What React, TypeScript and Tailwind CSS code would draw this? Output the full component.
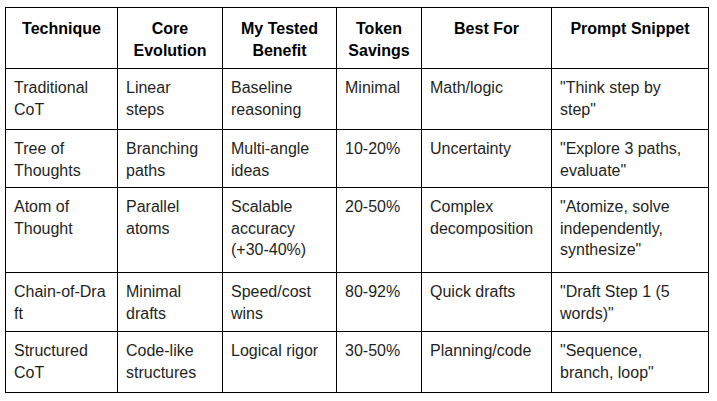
const headers = [
  ['Technique'],
  ['Core', 'Evolution'],
  ['My Tested', 'Benefit'],
  ['Token', 'Savings'],
  ['Best For'],
  ['Prompt Snippet'],
];

const rows: { h: string; cells: string[][] }[] = [
  {
    h: 'h-[61px]',
    cells: [['Traditional', 'CoT'], ['Linear', 'steps'], ['Baseline', 'reasoning'], ['Minimal'], ['Math/logic'], ['"Think step by', 'step"']],
  },
  {
    h: 'h-[58px]',
    cells: [['Tree of', 'Thoughts'], ['Branching', 'paths'], ['Multi-angle', 'ideas'], ['10-20%'], ['Uncertainty'], ['"Explore 3 paths,', 'evaluate"']],
  },
  {
    h: 'h-[85px]',
    cells: [
      ['Atom of', 'Thought'],
      ['Parallel', 'atoms'],
      ['Scalable', 'accuracy', '(+30-40%)'],
      ['20-50%'],
      ['Complex', 'decomposition'],
      ['"Atomize, solve', 'independently,', 'synthesize"'],
    ],
  },
  {
    h: 'h-[59px]',
    cells: [['Chain-of-Dra', 'ft'], ['Minimal', 'drafts'], ['Speed/cost', 'wins'], ['80-92%'], ['Quick drafts'], ['"Draft Step 1 (5', 'words)"']],
  },
  {
    h: 'h-[61px]',
    cells: [['Structured', 'CoT'], ['Code-like', 'structures'], ['Logical rigor'], ['30-50%'], ['Planning/code'], ['"Sequence,', 'branch, loop"']],
  },
];

const widths = ['w-[112px]', 'w-[105px]', 'w-[114px]', 'w-[85px]', 'w-[130px]', 'w-[157px]'];

export default function App() {
  return (
    <div className="w-[717px] h-[401px] bg-white pl-[5px] pt-[7px] font-['Liberation_Sans',Arial,sans-serif] text-[16px] leading-[21.5px] text-black">
      <table className="table-fixed border-collapse w-[704px]">
        <colgroup>
          {widths.map((w, i) => (
            <col key={i} className={w} />
          ))}
        </colgroup>
        <thead>
          <tr className="h-[61px]">
            {headers.map((lines, i) => (
              <th key={i} className="border border-black align-top text-center font-bold px-2 pt-[10px]">
                {lines.map((l, j) => (
                  <div key={j} className="whitespace-nowrap">{l}</div>
                ))}
              </th>
            ))}
          </tr>
        </thead>
        <tbody>
          {rows.map((r, ri) => (
            <tr key={ri} className={r.h}>
              {r.cells.map((lines, ci) => (
                <td key={ci} className="border border-black align-top text-left pl-[8px] pr-2 pt-[8px] text-[#1f1f1f]">
                  {lines.map((l, j) => (
                    <div key={j} className="whitespace-nowrap">{l}</div>
                  ))}
                </td>
              ))}
            </tr>
          ))}
        </tbody>
      </table>
    </div>
  );
}
